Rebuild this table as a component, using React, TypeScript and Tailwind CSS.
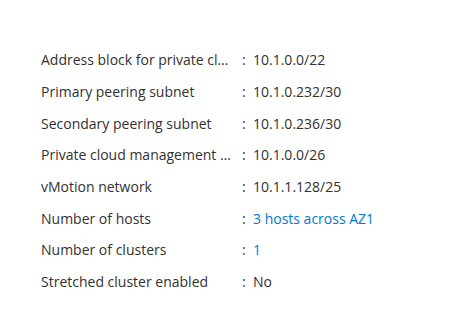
const rows: { label: string; value: string; link?: boolean }[] = [
  { label: 'Address block for private cloud', value: '10.1.0.0/22' },
  { label: 'Primary peering subnet', value: '10.1.0.232/30' },
  { label: 'Secondary peering subnet', value: '10.1.0.236/30' },
  { label: 'Private cloud management network', value: '10.1.0.0/26' },
  { label: 'vMotion network', value: '10.1.1.128/25' },
  { label: 'Number of hosts', value: '3 hosts across AZ1', link: true },
  { label: 'Number of clusters', value: '1', link: true },
  { label: 'Stretched cluster enabled', value: 'No' },
]

export default function App() {
  return (
    <div className="w-[468px] h-[321px] bg-white pt-[44px] pl-[41px] font-['Segoe_UI','Open_Sans',sans-serif] text-[14px] text-[#323130]">
      {rows.map((r) => (
        <div key={r.label} className="flex items-center h-[31.7px]">
          <div className="w-[192px] shrink-0 truncate">{r.label}</div>
          <div className="ml-[9px] w-[11px] shrink-0">:</div>
          <div className={r.link ? 'text-[#0078d4]' : ''}>{r.value}</div>
        </div>
      ))}
    </div>
  )
}
